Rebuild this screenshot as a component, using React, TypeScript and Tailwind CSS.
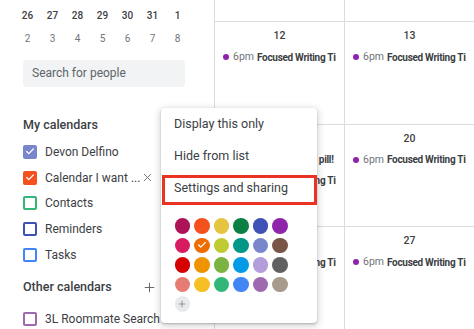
import { Check, X, Plus } from 'lucide-react'

const miniRows = [
  { days: ['26', '27', '28', '29', '30', '31', '1'], dark: true },
  { days: ['2', '3', '4', '5', '6', '7', '8'], dark: false },
]

const myCalendars = [
  { name: 'Devon Delfino', color: '#7986cb', checked: true },
  { name: 'Calendar I want ...', color: '#f4511e', checked: true, remove: true },
  { name: 'Contacts', color: '#33b679', checked: false },
  { name: 'Reminders', color: '#3f51b5', checked: false },
  { name: 'Tasks', color: '#4285f4', checked: false },
]

const swatches = [
  '#ad1457', '#f4511e', '#e4c441', '#0b8043', '#3f51b5', '#8e24aa',
  '#d81b60', '#ef6c00', '#c0ca33', '#009688', '#7986cb', '#795548',
  '#d50000', '#f09300', '#7cb342', '#039be5', '#b39ddb', '#616161',
  '#e67c73', '#f6bf26', '#33b679', '#4285f4', '#9e69af', '#a79b8e',
]

type Ev = { time: string; title: string }

const weeks: { days: { date?: string; events: Ev[] }[] }[] = [
  {
    days: [
      { date: '12', events: [{ time: '6pm', title: 'Focused Writing Time' }] },
      { date: '13', events: [{ time: '6pm', title: 'Focused Writing Time' }] },
    ],
  },
  {
    days: [
      {
        events: [
          { time: '8am', title: 'Time to take a pill!' },
          { time: '6pm', title: 'Focused Writing Time' },
        ],
      },
      { date: '20', events: [{ time: '6pm', title: 'Focused Writing Time' }] },
    ],
  },
  {
    days: [
      { events: [{ time: '6pm', title: 'Focused Writing Time' }] },
      { date: '27', events: [{ time: '6pm', title: 'Focused Writing Time' }] },
    ],
  },
]

function CalCheckbox({ color, checked }: { color: string; checked: boolean }) {
  return (
    <div
      className="w-[14px] h-[14px] rounded-[2px] border-2 flex items-center justify-center shrink-0"
      style={{ borderColor: color, background: checked ? color : 'transparent' }}
    >
      {checked && <Check size={11} strokeWidth={3} className="text-white" />}
    </div>
  )
}

function Sidebar() {
  return (
    <div className="w-[214px] shrink-0 flex flex-col">
      {/* Mini month */}
      <div className="pl-[15px] pt-[4px]">
        {miniRows.map((row, i) => (
          <div key={i} className="grid grid-cols-[repeat(7,25px)] h-[23px] items-center">
            {row.days.map((d) => (
              <span
                key={d}
                className={`text-center text-[10px] ${row.dark ? 'text-[#3c4043] font-medium' : 'text-[#70757a]'}`}
              >
                {d}
              </span>
            ))}
          </div>
        ))}
      </div>

      {/* Search */}
      <div className="ml-[23px] mt-[10px] w-[162px] h-[28px] rounded bg-[#f1f3f4] flex items-center pl-[9px]">
        <span className="text-[12px] text-[#5f6368]">Search for people</span>
      </div>

      {/* My calendars */}
      <div className="pl-[23px] mt-[29px] h-[20px] flex items-center">
        <span className="text-[12.5px] font-medium text-[#3c4043]">My calendars</span>
      </div>
      <div className="pl-[23px] mt-[4px] flex flex-col">
        {myCalendars.map((c) => (
          <div key={c.name} className="h-[25.8px] flex items-center">
            <CalCheckbox color={c.color} checked={c.checked} />
            <span className="ml-[8px] text-[12px] text-[#3c4043] w-[95px] whitespace-nowrap">{c.name}</span>
            {c.remove && <X size={13} strokeWidth={1.6} className="text-[#5f6368] ml-[1px]" />}
          </div>
        ))}
      </div>

      {/* Other calendars */}
      <div className="pl-[23px] mt-[10px] h-[20px] flex items-center">
        <span className="text-[12.5px] font-medium text-[#3c4043] w-[119px]">Other calendars</span>
        <Plus size={15} strokeWidth={1.5} className="text-[#5f6368]" />
      </div>
      <div className="pl-[23px] mt-[13px] h-[20px] flex items-center">
        <CalCheckbox color="#9e69af" checked={false} />
        <span className="ml-[8px] text-[12px] text-[#3c4043] whitespace-nowrap">3L Roommate Search</span>
      </div>
    </div>
  )
}

function DayCell({ date, events }: { date?: string; events: Ev[] }) {
  return (
    <div className="flex-1 basis-0 min-w-0 border-l border-[#dadce0] overflow-hidden pt-[6px] pl-[8px] pr-[8px]">
      <div className="h-[16px] flex items-center justify-center">
        <span className="text-[10.5px] font-medium text-[#3c4043]">{date}</span>
      </div>
      <div className="mt-[3px] flex flex-col">
        {events.map((e, i) => (
          <div key={i} className="h-[20.5px] flex items-center whitespace-nowrap overflow-hidden">
            <span className="w-[6px] h-[6px] rounded-full bg-[#8e24aa] shrink-0" />
            <span className="ml-[4px] text-[10.5px] text-[#70757a]">{e.time}</span>
            <span className="ml-[3px] text-[10px] font-bold tracking-[-0.3px] text-[#3c4043]">{e.title}</span>
          </div>
        ))}
      </div>
    </div>
  )
}

function Grid() {
  return (
    <div className="flex-1 min-w-0 flex flex-col">
      <div className="h-[22px] flex border-b border-[#dadce0] shrink-0">
        <div className="flex-1 basis-0 border-l border-[#dadce0]" />
        <div className="flex-1 basis-0 border-l border-[#dadce0]" />
      </div>
      {weeks.map((w, i) => (
        <div key={i} className="h-[102.5px] flex border-b border-[#dadce0] shrink-0">
          {w.days.map((d, j) => (
            <DayCell key={j} date={d.date} events={d.events} />
          ))}
        </div>
      ))}
    </div>
  )
}

function ColorMenu() {
  return (
    <div className="absolute left-[161px] top-[108px] w-[156px] h-[215px] bg-white rounded-[4px] shadow-[0_2px_6px_2px_rgba(60,64,67,0.18),0_1px_2px_rgba(60,64,67,0.3)]">
      {['Display this only', 'Hide from list', 'Settings and sharing'].map((t) => (
        <div key={t} className="h-[32px] flex items-center pl-[13px] text-[12.5px] text-[#3c4043]">
          {t}
        </div>
      ))}
      <div className="pl-[11.5px] pt-[12px] grid grid-cols-[repeat(6,19.5px)] auto-rows-[19.5px]">
        {swatches.map((c, i) => (
          <div key={i} className="flex items-center justify-center">
            <div className="w-[15.5px] h-[15.5px] rounded-full flex items-center justify-center" style={{ background: c }}>
              {i === 7 && <Check size={10} strokeWidth={3} className="text-white" />}
            </div>
          </div>
        ))}
        <div className="flex items-center justify-center">
          <div className="w-[15.5px] h-[15.5px] rounded-full bg-[#e8eaed] flex items-center justify-center">
            <Plus size={10} strokeWidth={2} className="text-[#80868b]" />
          </div>
        </div>
      </div>
      {/* annotation box */}
      <div className="absolute left-[1px] top-[67px] w-[155px] h-[30px] border-[3px] border-[#ea3323]" />
    </div>
  )
}

export default function App() {
  return (
    <div className="relative w-[474px] h-[329px] overflow-hidden bg-white flex font-['Roboto',_'Liberation_Sans',_sans-serif]">
      <Sidebar />
      <Grid />
      <ColorMenu />
    </div>
  )
}
